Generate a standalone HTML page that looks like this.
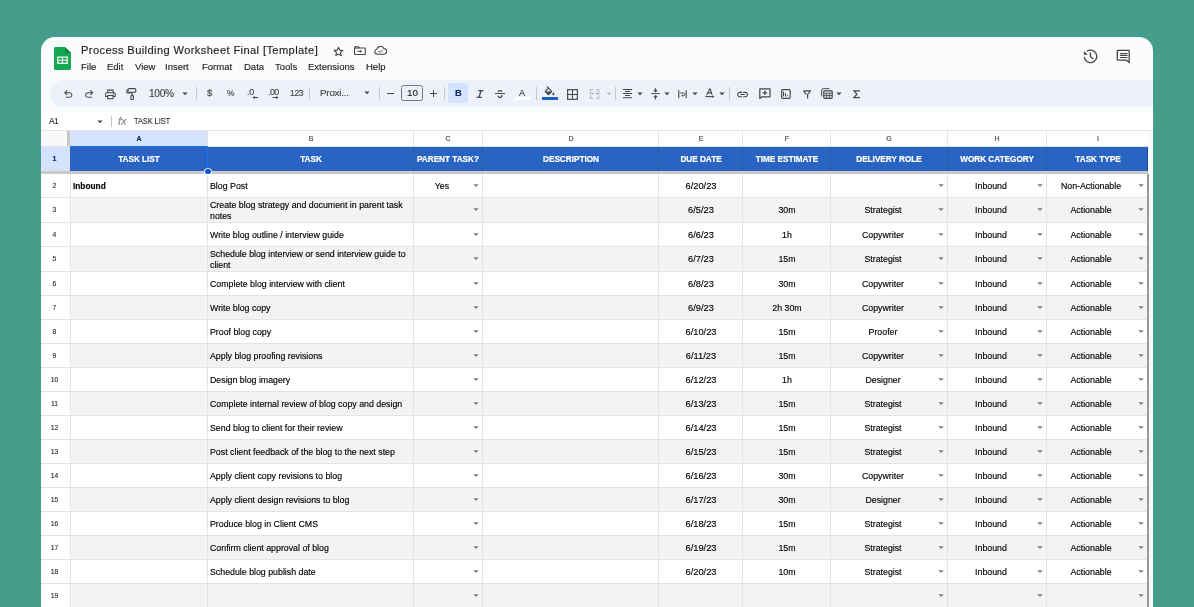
<!DOCTYPE html>
<html><head><meta charset="utf-8"><style>
html,body{margin:0;padding:0;width:1194px;height:607px;overflow:hidden;background:#469d8c;font-family:"Liberation Sans",sans-serif;}
#win{position:absolute;left:0;top:0;width:1194px;height:607px;clip-path:inset(37px 41px 0px 41px round 14px 14px 0 0);background:#f9fbfd;}
#win div{position:absolute;}
.t{white-space:nowrap;color:#000;will-change:transform;-webkit-text-stroke-width:0.15px;}
</style></head><body><div id="win">
<div style="left:41px;top:112px;width:1112px;height:495px;background:#fff"></div>
<svg style="position:absolute;left:54px;top:47px" width="17" height="23" viewBox="0 0 17 23"><path d="M1.5 0H11l6 6v15.5a1.5 1.5 0 0 1-1.5 1.5h-14A1.5 1.5 0 0 1 0 21.5v-20A1.5 1.5 0 0 1 1.5 0z" fill="#15a852"/><path d="M11 0l6 6h-6z" fill="#0a8a3e"/><rect x="3.2" y="9.5" width="10.6" height="7.5" fill="#fff"/><rect x="4.4" y="10.7" width="3.6" height="2" fill="#15a852"/><rect x="9" y="10.7" width="3.6" height="2" fill="#15a852"/><rect x="4.4" y="13.7" width="3.6" height="2" fill="#15a852"/><rect x="9" y="13.7" width="3.6" height="2" fill="#15a852"/></svg>
<div class="t" style="left:81px;top:42.2px;font-size:11.1px;color:#1f1f1f;line-height:16px;letter-spacing:0.4px;-webkit-text-stroke:0.15px #1f1f1f">Process Building Worksheet Final [Template]</div>
<svg style="position:absolute;left:333px;top:45.5px" width="11" height="10.5" viewBox="0 0 11 10.5"><path d="M5.5 1.2l1.25 2.95 3.15.28-2.4 2.08.72 3.1L5.5 8 2.78 9.6l.72-3.1-2.4-2.08 3.15-.28z" stroke="#444746" fill="none" stroke-width="1.1" stroke-linejoin="round"/></svg>
<svg style="position:absolute;left:353.5px;top:46px" width="12" height="9" viewBox="0 0 12 9"><path d="M1.1 0.9h3.4l1.1 1.1h5.1a0.6 0.6 0 0 1 .6.6v5.3a0.6 0.6 0 0 1-.6.6H1.2a0.6 0.6 0 0 1-.6-.6V1.5a0.6 0.6 0 0 1 .5-.6z" stroke="#444746" fill="none" stroke-width="1.1"/><path d="M0.8 2.2h4.6" stroke="#444746" stroke-width="0.9"/><path d="M3.3 5.2h3.3" stroke="#444746" stroke-width="1.1"/><path d="M8.3 5.2L6.1 3.7V6.7z" fill="#444746"/></svg>
<svg style="position:absolute;left:374.3px;top:46px" width="13" height="9" viewBox="0 0 13 9"><path d="M3.2 8.2a2.5 2.5 0 0 1-.35-4.95 3.7 3.7 0 0 1 7.05-0.6 2.6 2.6 0 0 1 0.1 5.55z" stroke="#444746" fill="none" stroke-width="1.1"/><path d="M4.5 5l1.5 1.5 2.6-2.6" stroke="#444746" fill="none" stroke-width="1"/></svg>
<div class="t" style="left:81px;top:61px;font-size:9.5px;color:#1f1f1f;line-height:12px">File</div>
<div class="t" style="left:107px;top:61px;font-size:9.5px;color:#1f1f1f;line-height:12px">Edit</div>
<div class="t" style="left:134.7px;top:61px;font-size:9.5px;color:#1f1f1f;line-height:12px">View</div>
<div class="t" style="left:165.4px;top:61px;font-size:9.5px;color:#1f1f1f;line-height:12px">Insert</div>
<div class="t" style="left:201.7px;top:61px;font-size:9.5px;color:#1f1f1f;line-height:12px">Format</div>
<div class="t" style="left:243.5px;top:61px;font-size:9.5px;color:#1f1f1f;line-height:12px">Data</div>
<div class="t" style="left:274.8px;top:61px;font-size:9.5px;color:#1f1f1f;line-height:12px">Tools</div>
<div class="t" style="left:308px;top:61px;font-size:9.5px;color:#1f1f1f;line-height:12px">Extensions</div>
<div class="t" style="left:365.5px;top:61px;font-size:9.5px;color:#1f1f1f;line-height:12px">Help</div>
<svg style="position:absolute;left:1083px;top:49px" width="15" height="15" viewBox="0 0 15 15"><path d="M3.94 2.32A6.2 6.2 0 1 1 1.32 7.9" stroke="#444746" fill="none" stroke-width="1.35"/><path d="M0.9 1.9V5.7H4.7z" fill="#444746"/><path d="M7.4 3.5V7.7L10.5 9.9" stroke="#444746" fill="none" stroke-width="1.3"/></svg>
<svg style="position:absolute;left:1116px;top:49px" width="15" height="15" viewBox="0 0 15 15"><path d="M1.9 1.4h10.7a0.6 0.6 0 0 1 .6.6V13.6l-2.5-2.4H1.9a0.6 0.6 0 0 1-.6-.6V2a0.6 0.6 0 0 1 .6-.6z" stroke="#444746" fill="none" stroke-width="1.3" stroke-linejoin="round"/><path d="M4 4.6h7.6M4 6.5h7.6M4 8.5h7.6" stroke="#444746" stroke-width="1.05"/></svg>
<div style="left:50px;top:80px;width:1130px;height:26.5px;background:#edf2fa;border-radius:13.25px"></div>
<svg style="position:absolute;left:61.7px;top:88.1px" width="12.45" height="12.45" viewBox="0 -960 960 960"><path fill="#444746" d="M280-200v-80h284q63 0 109.5-40T720-420q0-60-46.5-100T564-560H312l104 104-56 56-200-200 200-200 56 56-104 104h252q97 0 166.5 63T800-420q0 94-69.5 157T564-200H280Z"/></svg>
<svg style="position:absolute;left:82.7px;top:88.1px" width="12.45" height="12.45" viewBox="0 -960 960 960"><path fill="#444746" d="M396-200q-97 0-166.5-63T160-420q0-94 69.5-157T396-640h252L544-744l56-56 200 200-200 200-56-56 104-104H396q-63 0-109.5 40T240-420q0 60 46.5 100T396-280h284v80H396Z"/></svg>
<svg style="position:absolute;left:103.9px;top:87.6px" width="12.8" height="12.8" viewBox="0 -960 960 960"><path fill="#444746" d="M640-640v-120H320v120h-80v-200h480v200h-80Zm-480 80h640-640Zm560 100q17 0 28.5-11.5T760-500q0-17-11.5-28.5T720-540q-17 0-28.5 11.5T680-500q0 17 11.5 28.5T720-460Zm-80 260v-160H320v160h320Zm80 80H240v-160H80v-240q0-51 35-85.5t85-34.5h560q51 0 85.5 34.5T880-520v240H720v160Zm80-240v-160q0-17-11.5-28.5T760-560H200q-17 0-28.5 11.5T160-520v160h80v-80h480v80h80Z"/></svg>
<svg style="position:absolute;left:126px;top:88px" width="11" height="12" viewBox="0 0 11 12"><rect x="2" y="0.6" width="7.8" height="3.6" rx="1" stroke="#444746" fill="none" stroke-width="1.15"/><path d="M2 2.4H0.9v2.6h5.3v2.4" stroke="#444746" fill="none" stroke-width="1.1"/><rect x="4.9" y="7.6" width="2.6" height="3.9" rx="0.8" stroke="#444746" fill="none" stroke-width="1.1"/></svg>
<div class="t" style="left:148.7px;top:88.3px;font-size:10.2px;color:#444746;line-height:12px;letter-spacing:-0.3px">100%</div>
<svg style="position:absolute;left:181.6px;top:91.5px" width="6" height="4" viewBox="0 0 6 4"><path d="M0.3 0.5h5.4L3 3.3z" fill="#444746"/></svg>
<div style="left:196px;top:86.5px;width:1px;height:13px;background:#c7c7c7"></div>
<div style="left:309px;top:86.5px;width:1px;height:13px;background:#c7c7c7"></div>
<div style="left:379px;top:86.5px;width:1px;height:13px;background:#c7c7c7"></div>
<div style="left:444px;top:86.5px;width:1px;height:13px;background:#c7c7c7"></div>
<div style="left:536px;top:86.5px;width:1px;height:13px;background:#c7c7c7"></div>
<div style="left:615px;top:86.5px;width:1px;height:13px;background:#c7c7c7"></div>
<div style="left:729px;top:86.5px;width:1px;height:13px;background:#c7c7c7"></div>
<div class="t" style="left:206.5px;top:86.5px;font-size:9.5px;color:#444746;line-height:12px">$</div>
<div class="t" style="left:227px;top:87.2px;font-size:8.4px;color:#444746;line-height:12px">%</div>
<div class="t" style="left:246.5px;top:86px;font-size:9px;color:#444746;line-height:12px;letter-spacing:-0.3px">.0</div>
<svg style="position:absolute;left:251.5px;top:94.5px" width="7" height="5" viewBox="0 0 7 5"><path d="M6.3 2.5H1.5" stroke="#444746" stroke-width="1"/><path d="M0.4 2.5L2.9 0.9V4.1z" fill="#444746"/></svg>
<div class="t" style="left:267.5px;top:86px;font-size:9px;color:#444746;line-height:12px;letter-spacing:-0.6px">.00</div>
<svg style="position:absolute;left:272px;top:94.5px" width="7" height="5" viewBox="0 0 7 5"><path d="M0.7 2.5h4.8" stroke="#444746" stroke-width="1"/><path d="M6.6 2.5L4.1 0.9V4.1z" fill="#444746"/></svg>
<div class="t" style="left:289.5px;top:88px;font-size:8.6px;color:#444746;line-height:11px;letter-spacing:-0.4px">123</div>
<div class="t" style="left:319.7px;top:86.8px;font-size:9.9px;color:#444746;line-height:12px;letter-spacing:-0.25px">Proxi...</div>
<svg style="position:absolute;left:364px;top:91px" width="6" height="4" viewBox="0 0 6 4"><path d="M0.3 0.5h5.4L3 3.3z" fill="#444746"/></svg>
<div style="left:387px;top:92.5px;width:7px;height:1px;background:#444746"></div>
<div style="left:401px;top:85.3px;width:20.4px;height:13.4px;border:1px solid #747775;border-radius:2.5px"></div>
<div class="t" style="left:407.2px;top:86.8px;font-size:9.9px;color:#1f1f1f;line-height:12px">10</div>
<div style="left:430px;top:92.5px;width:7px;height:1px;background:#444746"></div>
<div style="left:433px;top:89.5px;width:1px;height:7px;background:#444746"></div>
<div style="left:448px;top:83px;width:19.5px;height:19.5px;background:#d3e3fd;border-radius:3px"></div>
<div class="t" style="left:454.6px;top:86.6px;font-size:9.4px;font-weight:700;color:#0b2a66;line-height:12px">B</div>
<svg style="position:absolute;left:475.5px;top:89.5px" width="8" height="8" viewBox="0 0 8 8"><path d="M2.2 0.7h5.2M0.6 7.3h5.2M5 0.7L3 7.3" stroke="#444746" fill="none" stroke-width="1.3"/></svg>
<svg style="position:absolute;left:494px;top:87.9px" width="12" height="12" viewBox="0 -960 960 960"><path fill="#444746" d="M486-160q-76 0-135-45t-85-123l88-38q14 48 48.5 79t85.5 31q42 0 76-20t34-64q0-18-7-33t-19-27h112q5 14 7.5 28.5T694-340q0 86-61.5 133T486-160ZM80-480v-80h800v80H80Zm402-326q66 0 115.5 32.5T674-674l-88 39q-9-29-33.5-52T484-710q-41 0-68 18.5T386-640h-96q2-69 54.5-117.5T482-806Z"/></svg>
<div class="t" style="left:518.5px;top:87px;font-size:9px;color:#444746;line-height:12px">A</div>
<div style="left:515px;top:97px;width:15px;height:2.5px;background:#fff"></div>
<svg style="position:absolute;left:542.8px;top:86.3px" width="13.2" height="13.2" viewBox="0 0 24 24"><path fill="#444746" d="M16.56 8.94L7.62 0 6.21 1.41l2.38 2.38-5.15 5.15c-.59.59-.59 1.54 0 2.12l5.5 5.5c.29.29.68.44 1.06.44s.77-.15 1.06-.44l5.5-5.5c.59-.58.59-1.530 0-2.12zM5.21 10L10 5.21 14.79 10H5.21zM19 11.5s-2 2.170-2 3.5c0 1.1.9 2 2 2s2-.9 2-2c0-1.33-2-3.5-2-3.5z"/></svg>
<div style="left:542px;top:97px;width:16px;height:2.8px;background:#1f5fc9"></div>
<svg style="position:absolute;left:567px;top:88.5px" width="11" height="11" viewBox="0 0 11 11"><rect x="0.65" y="0.65" width="9.7" height="9.7" stroke="#444746" fill="none" stroke-width="1.15"/><path d="M5.5 0.7v9.6M0.7 5.5h9.6" stroke="#444746" stroke-width="1.05"/></svg>
<svg style="position:absolute;left:588px;top:88px" width="13" height="12" viewBox="0 0 13 12"><path d="M5 1.7H2.5V4.2M2.5 6.9V10.2H5M8 1.7H10.7V4.2M10.7 6.9V10.2H8" stroke="#b3b6ba" fill="none" stroke-width="1.1"/><path d="M1 5.5H4.3M12.2 5.5H8.9" stroke="#b3b6ba" stroke-width="1"/><path d="M5.8 5.5L3.9 4.1V6.9zM7.4 5.5L9.3 4.1V6.9z" fill="#b3b6ba"/></svg>
<svg style="position:absolute;left:605.7px;top:91.5px" width="6" height="4" viewBox="0 0 6 4"><path d="M0.3 0.5h5.4L3 3.3z" fill="#bfc2c6"/></svg>
<svg style="position:absolute;left:622px;top:88px" width="11" height="12" viewBox="0 0 11 12"><path d="M0.9 1.5h9.2M3 3.55h5M0.9 5.5h9.2M3 7.5h5M0.9 9.8h9.2" stroke="#444746" stroke-width="1.05"/></svg>
<svg style="position:absolute;left:637px;top:91.5px" width="6" height="4" viewBox="0 0 6 4"><path d="M0.3 0.5h5.4L3 3.3z" fill="#444746"/></svg>
<svg style="position:absolute;left:650.5px;top:88px" width="9" height="12" viewBox="0 0 9 12"><path d="M0.3 5.6h8.4" stroke="#444746" stroke-width="1"/><path d="M4.5 0.3v3M4.5 8.2v3.2" stroke="#444746" stroke-width="1.1"/><path d="M2.6 2.3L4.5 4.2 6.4 2.3zM2.6 9.1L4.5 7.2 6.4 9.1z" fill="#444746" stroke="#444746" stroke-width="0.5"/></svg>
<svg style="position:absolute;left:664px;top:91.5px" width="6" height="4" viewBox="0 0 6 4"><path d="M0.3 0.5h5.4L3 3.3z" fill="#444746"/></svg>
<svg style="position:absolute;left:677.5px;top:88.5px" width="9" height="11" viewBox="0 0 9 11"><path d="M0.8 1.3v8M8.2 1.3v8" stroke="#444746" stroke-width="1.1"/><path d="M2.3 4h3.3a1.3 1.3 0 0 1 0 2.6H4" stroke="#444746" fill="none" stroke-width="1"/><path d="M4.8 5.7l-1 0.9 1 0.9" stroke="#444746" fill="none" stroke-width="0.9"/></svg>
<svg style="position:absolute;left:691.5px;top:91.5px" width="6" height="4" viewBox="0 0 6 4"><path d="M0.3 0.5h5.4L3 3.3z" fill="#444746"/></svg>
<svg style="position:absolute;left:705px;top:88px" width="10" height="12" viewBox="0 0 10 12"><path d="M1.6 6.9L4.7 1.1h0.6L7 6.9M2.7 4.9h3.8" stroke="#444746" fill="none" stroke-width="1.1"/><path d="M0.4 8.6h7.6" stroke="#444746" stroke-width="1.1"/><path d="M9.4 8.6L7.4 7.2V10z" fill="#444746"/></svg>
<svg style="position:absolute;left:719px;top:91.5px" width="6" height="4" viewBox="0 0 6 4"><path d="M0.3 0.5h5.4L3 3.3z" fill="#444746"/></svg>
<svg style="position:absolute;left:736.4px;top:87.7px" width="13.15" height="13.15" viewBox="0 -960 960 960"><path fill="#444746" d="M440-280H280q-83 0-141.5-58.5T80-480q0-83 58.5-141.5T280-680h160v80H280q-50 0-85 35t-35 85q0 50 35 85t85 35h160v80ZM320-440v-80h320v80H320Zm200 160v-80h160q50 0 85-35t35-85q0-50-35-85t-85-35H520v-80h160q83 0 141.5 58.5T880-480q0 83-58.5 141.5T680-280H520Z"/></svg>
<svg style="position:absolute;left:758.5px;top:88px" width="12" height="11" viewBox="0 0 12 11"><path d="M0.8 0.8h10.2v8H2.8L0.8 10.6z" stroke="#444746" fill="none" stroke-width="1.2" stroke-linejoin="round"/><path d="M5.9 2.5v4.6M3.6 4.8h4.6" stroke="#444746" stroke-width="1.2"/></svg>
<svg style="position:absolute;left:781px;top:88.5px" width="10" height="10" viewBox="0 0 10 10"><rect x="0.65" y="0.65" width="8.5" height="8.7" rx="1" stroke="#444746" fill="none" stroke-width="1.15"/><path d="M2.5 2.6v4.8M4.5 4v3.4M6.5 6.3v1.1" stroke="#444746" stroke-width="1"/></svg>
<svg style="position:absolute;left:803px;top:89.5px" width="8" height="9" viewBox="0 0 8 9"><path d="M0.5 0.8h7L4.6 4.5v4M3.4 4.5L0.5 0.8" stroke="#444746" fill="none" stroke-width="1.2" stroke-linejoin="round"/></svg>
<svg style="position:absolute;left:820.5px;top:88px" width="12" height="11" viewBox="0 0 12 11"><path d="M0.7 8.5V2.2a1.5 1.5 0 0 1 1.5-1.5h6.3" stroke="#444746" fill="none" stroke-width="1"/><rect x="2.8" y="2.8" width="8.4" height="7.6" rx="0.8" stroke="#444746" fill="none" stroke-width="1.2"/><path d="M2.8 5.2h8.4M2.8 7.6h8.4M5.6 5.2v5.2M8.4 5.2v5.2" stroke="#444746" stroke-width="0.9"/></svg>
<svg style="position:absolute;left:836px;top:91.5px" width="6" height="4" viewBox="0 0 6 4"><path d="M0.3 0.5h5.4L3 3.3z" fill="#444746"/></svg>
<svg style="position:absolute;left:852.5px;top:89.5px" width="7" height="9" viewBox="0 0 7 9"><path d="M6.3 1.6V0.8H0.9L3.9 4.2 0.9 7.6H6.3V6.8" stroke="#444746" fill="none" stroke-width="1.25" stroke-linejoin="miter"/></svg>
<div class="t" style="left:49px;top:115.5px;font-size:8.4px;color:#1f1f1f;line-height:11px;letter-spacing:-0.5px;-webkit-text-stroke:0.1px #1f1f1f">A1</div>
<svg style="position:absolute;left:96.8px;top:119.5px" width="6" height="4" viewBox="0 0 6 4"><path d="M0.3 0.5h5.4L3 3.3z" fill="#444746"/></svg>
<div style="left:110.5px;top:116px;width:1px;height:11px;background:#c7c7c7"></div>
<div class="t" style="left:118px;top:114.5px;font-size:11px;color:#80868b;line-height:12px;font-family:"Liberation Serif",serif;letter-spacing:-0.5px"><i>fx</i></div>
<div class="t" style="left:134.4px;top:115.5px;font-size:8.4px;color:#1f1f1f;line-height:11px;transform:scaleX(0.875);transform-origin:0 0;-webkit-text-stroke:0.1px #1f1f1f">TASK LIST</div>
<div style="left:41px;top:131px;width:1107px;height:476px;background:#fff"></div>
<div style="left:71px;top:198px;width:1077px;height:24px;background:#f3f3f3"></div>
<div style="left:71px;top:247px;width:1077px;height:24px;background:#f3f3f3"></div>
<div style="left:71px;top:296px;width:1077px;height:23px;background:#f3f3f3"></div>
<div style="left:71px;top:344px;width:1077px;height:23px;background:#f3f3f3"></div>
<div style="left:71px;top:392px;width:1077px;height:23px;background:#f3f3f3"></div>
<div style="left:71px;top:440px;width:1077px;height:23px;background:#f3f3f3"></div>
<div style="left:71px;top:488px;width:1077px;height:23px;background:#f3f3f3"></div>
<div style="left:71px;top:536px;width:1077px;height:23px;background:#f3f3f3"></div>
<div style="left:71px;top:584px;width:1077px;height:23px;background:#f3f3f3"></div>
<div style="left:41px;top:130px;width:1112px;height:1px;background:#e4e4e4"></div>
<div style="left:41px;top:131px;width:26px;height:15px;background:#f8f9fa"></div>
<div style="left:67px;top:131px;width:3px;height:16px;background:#c7c7c7"></div>
<div style="left:71px;top:131px;width:136px;height:15px;background:#d3e3fd"></div>
<div style="left:41px;top:146px;width:1107px;height:1px;background:#e4e4e4"></div>
<div style="left:41px;top:147px;width:29px;height:24px;background:#d3e3fd"></div>
<div style="left:70px;top:147px;width:1078px;height:24px;background:#2a64c2"></div>
<div style="left:41px;top:171px;width:1107px;height:3px;background:#c9c9c9"></div>
<div style="left:1148px;top:131px;width:5px;height:476px;background:#f8f9fa"></div>
<div style="left:41px;top:197px;width:1107px;height:1px;background:#e4e4e4"></div>
<div style="left:41px;top:222px;width:1107px;height:1px;background:#e4e4e4"></div>
<div style="left:41px;top:246px;width:1107px;height:1px;background:#e4e4e4"></div>
<div style="left:41px;top:271px;width:1107px;height:1px;background:#e4e4e4"></div>
<div style="left:41px;top:295px;width:1107px;height:1px;background:#e4e4e4"></div>
<div style="left:41px;top:319px;width:1107px;height:1px;background:#e4e4e4"></div>
<div style="left:41px;top:343px;width:1107px;height:1px;background:#e4e4e4"></div>
<div style="left:41px;top:367px;width:1107px;height:1px;background:#e4e4e4"></div>
<div style="left:41px;top:391px;width:1107px;height:1px;background:#e4e4e4"></div>
<div style="left:41px;top:415px;width:1107px;height:1px;background:#e4e4e4"></div>
<div style="left:41px;top:439px;width:1107px;height:1px;background:#e4e4e4"></div>
<div style="left:41px;top:463px;width:1107px;height:1px;background:#e4e4e4"></div>
<div style="left:41px;top:487px;width:1107px;height:1px;background:#e4e4e4"></div>
<div style="left:41px;top:511px;width:1107px;height:1px;background:#e4e4e4"></div>
<div style="left:41px;top:535px;width:1107px;height:1px;background:#e4e4e4"></div>
<div style="left:41px;top:559px;width:1107px;height:1px;background:#e4e4e4"></div>
<div style="left:41px;top:583px;width:1107px;height:1px;background:#e4e4e4"></div>
<div style="left:70px;top:131px;width:1px;height:15px;background:#e4e4e4"></div>
<div style="left:70px;top:174px;width:1px;height:433px;background:#e4e4e4"></div>
<div style="left:207px;top:131px;width:1px;height:15px;background:#e4e4e4"></div>
<div style="left:207px;top:174px;width:1px;height:433px;background:#e4e4e4"></div>
<div style="left:207px;top:147px;width:1px;height:24px;background:rgba(0,0,0,0.08)"></div>
<div style="left:413px;top:131px;width:1px;height:15px;background:#e4e4e4"></div>
<div style="left:413px;top:174px;width:1px;height:433px;background:#e4e4e4"></div>
<div style="left:413px;top:147px;width:1px;height:24px;background:rgba(0,0,0,0.08)"></div>
<div style="left:482px;top:131px;width:1px;height:15px;background:#e4e4e4"></div>
<div style="left:482px;top:174px;width:1px;height:433px;background:#e4e4e4"></div>
<div style="left:482px;top:147px;width:1px;height:24px;background:rgba(0,0,0,0.08)"></div>
<div style="left:658px;top:131px;width:1px;height:15px;background:#e4e4e4"></div>
<div style="left:658px;top:174px;width:1px;height:433px;background:#e4e4e4"></div>
<div style="left:658px;top:147px;width:1px;height:24px;background:rgba(0,0,0,0.08)"></div>
<div style="left:742px;top:131px;width:1px;height:15px;background:#e4e4e4"></div>
<div style="left:742px;top:174px;width:1px;height:433px;background:#e4e4e4"></div>
<div style="left:742px;top:147px;width:1px;height:24px;background:rgba(0,0,0,0.08)"></div>
<div style="left:830px;top:131px;width:1px;height:15px;background:#e4e4e4"></div>
<div style="left:830px;top:174px;width:1px;height:433px;background:#e4e4e4"></div>
<div style="left:830px;top:147px;width:1px;height:24px;background:rgba(0,0,0,0.08)"></div>
<div style="left:947px;top:131px;width:1px;height:15px;background:#e4e4e4"></div>
<div style="left:947px;top:174px;width:1px;height:433px;background:#e4e4e4"></div>
<div style="left:947px;top:147px;width:1px;height:24px;background:rgba(0,0,0,0.08)"></div>
<div style="left:1046px;top:131px;width:1px;height:15px;background:#e4e4e4"></div>
<div style="left:1046px;top:174px;width:1px;height:433px;background:#e4e4e4"></div>
<div style="left:1046px;top:147px;width:1px;height:24px;background:rgba(0,0,0,0.08)"></div>
<div style="left:1147px;top:174px;width:2px;height:433px;background:#9a9a9a"></div>
<div style="left:1147px;top:147px;width:1px;height:24px;background:#1d4a96"></div>
<div style="left:207px;top:146px;width:1px;height:25px;background:#1a73e8"></div>
<div style="left:70px;top:146px;width:138px;height:1px;background:#1a73e8"></div>
<div style="left:205.2px;top:168.5px;width:5.4px;height:5.4px;border-radius:50%;background:#0b57d0;box-shadow:0 0 0 0.8px #fff"></div>
<div class="t" style="left:39.0px;top:133.7px;width:200px;text-align:center;font-size:7px;font-weight:700;color:#0b2a66;line-height:10px">A</div>
<div class="t" style="left:210.5px;top:133.7px;width:200px;text-align:center;font-size:7px;color:#444;line-height:10px">B</div>
<div class="t" style="left:348.0px;top:133.7px;width:200px;text-align:center;font-size:7px;color:#444;line-height:10px">C</div>
<div class="t" style="left:470.5px;top:133.7px;width:200px;text-align:center;font-size:7px;color:#444;line-height:10px">D</div>
<div class="t" style="left:600.5px;top:133.7px;width:200px;text-align:center;font-size:7px;color:#444;line-height:10px">E</div>
<div class="t" style="left:686.5px;top:133.7px;width:200px;text-align:center;font-size:7px;color:#444;line-height:10px">F</div>
<div class="t" style="left:789.0px;top:133.7px;width:200px;text-align:center;font-size:7px;color:#444;line-height:10px">G</div>
<div class="t" style="left:897.0px;top:133.7px;width:200px;text-align:center;font-size:7px;color:#444;line-height:10px">H</div>
<div class="t" style="left:997.5px;top:133.7px;width:200px;text-align:center;font-size:7px;color:#444;line-height:10px">I</div>
<div class="t" style="left:39.0px;top:154px;width:200px;text-align:center;font-size:8.2px;font-weight:700;color:#fff;line-height:12px;-webkit-text-stroke:0.2px #fff">TASK LIST</div>
<div class="t" style="left:210.5px;top:154px;width:200px;text-align:center;font-size:8.2px;font-weight:700;color:#fff;line-height:12px;-webkit-text-stroke:0.2px #fff">TASK</div>
<div class="t" style="left:348.0px;top:154px;width:200px;text-align:center;font-size:8.2px;font-weight:700;color:#fff;line-height:12px;-webkit-text-stroke:0.2px #fff">PARENT TASK?</div>
<div class="t" style="left:470.5px;top:154px;width:200px;text-align:center;font-size:8.2px;font-weight:700;color:#fff;line-height:12px;-webkit-text-stroke:0.2px #fff">DESCRIPTION</div>
<div class="t" style="left:600.5px;top:154px;width:200px;text-align:center;font-size:8.2px;font-weight:700;color:#fff;line-height:12px;-webkit-text-stroke:0.2px #fff">DUE DATE</div>
<div class="t" style="left:686.5px;top:154px;width:200px;text-align:center;font-size:8.2px;font-weight:700;color:#fff;line-height:12px;-webkit-text-stroke:0.2px #fff">TIME ESTIMATE</div>
<div class="t" style="left:789.0px;top:154px;width:200px;text-align:center;font-size:8.2px;font-weight:700;color:#fff;line-height:12px;-webkit-text-stroke:0.2px #fff">DELIVERY ROLE</div>
<div class="t" style="left:897.0px;top:154px;width:200px;text-align:center;font-size:8.2px;font-weight:700;color:#fff;line-height:12px;-webkit-text-stroke:0.2px #fff">WORK CATEGORY</div>
<div class="t" style="left:997.5px;top:154px;width:200px;text-align:center;font-size:8.2px;font-weight:700;color:#fff;line-height:12px;-webkit-text-stroke:0.2px #fff">TASK TYPE</div>
<div class="t" style="left:40.0px;top:154px;width:29px;text-align:center;font-size:7px;font-weight:700;color:#0b2a66;line-height:10px">1</div>
<div class="t" style="left:40.4px;top:180.5px;width:29px;text-align:center;font-size:6.8px;color:#333;line-height:10px">2</div>
<div class="t" style="left:40.4px;top:205.0px;width:29px;text-align:center;font-size:6.8px;color:#333;line-height:10px">3</div>
<div class="t" style="left:40.4px;top:229.5px;width:29px;text-align:center;font-size:6.8px;color:#333;line-height:10px">4</div>
<div class="t" style="left:40.4px;top:254.0px;width:29px;text-align:center;font-size:6.8px;color:#333;line-height:10px">5</div>
<div class="t" style="left:40.4px;top:278.5px;width:29px;text-align:center;font-size:6.8px;color:#333;line-height:10px">6</div>
<div class="t" style="left:40.4px;top:302.5px;width:29px;text-align:center;font-size:6.8px;color:#333;line-height:10px">7</div>
<div class="t" style="left:40.4px;top:326.5px;width:29px;text-align:center;font-size:6.8px;color:#333;line-height:10px">8</div>
<div class="t" style="left:40.4px;top:350.5px;width:29px;text-align:center;font-size:6.8px;color:#333;line-height:10px">9</div>
<div class="t" style="left:40.4px;top:374.5px;width:29px;text-align:center;font-size:6.8px;color:#333;line-height:10px">10</div>
<div class="t" style="left:40.4px;top:398.5px;width:29px;text-align:center;font-size:6.8px;color:#333;line-height:10px">11</div>
<div class="t" style="left:40.4px;top:422.5px;width:29px;text-align:center;font-size:6.8px;color:#333;line-height:10px">12</div>
<div class="t" style="left:40.4px;top:446.5px;width:29px;text-align:center;font-size:6.8px;color:#333;line-height:10px">13</div>
<div class="t" style="left:40.4px;top:470.5px;width:29px;text-align:center;font-size:6.8px;color:#333;line-height:10px">14</div>
<div class="t" style="left:40.4px;top:494.5px;width:29px;text-align:center;font-size:6.8px;color:#333;line-height:10px">15</div>
<div class="t" style="left:40.4px;top:518.5px;width:29px;text-align:center;font-size:6.8px;color:#333;line-height:10px">16</div>
<div class="t" style="left:40.4px;top:542.5px;width:29px;text-align:center;font-size:6.8px;color:#333;line-height:10px">17</div>
<div class="t" style="left:40.4px;top:566.5px;width:29px;text-align:center;font-size:6.8px;color:#333;line-height:10px">18</div>
<div class="t" style="left:40.4px;top:590.5px;width:29px;text-align:center;font-size:6.8px;color:#333;line-height:10px">19</div>
<div class="t" style="left:72.5px;top:179.5px;font-size:8.3px;font-weight:700;line-height:12px">Inbound</div>
<div class="t" style="left:210px;top:179.5px;font-size:8.8px;line-height:12px">Blog Post</div>
<div style="left:473px;top:183.5px;width:6px;height:4px"><svg style="display:block" width="6" height="4" viewBox="0 0 6 4"><path d="M0.3 0.2h5.4L3 3.1z" fill="#7d7d7d"/></svg></div>
<div style="left:938px;top:183.5px;width:6px;height:4px"><svg style="display:block" width="6" height="4" viewBox="0 0 6 4"><path d="M0.3 0.2h5.4L3 3.1z" fill="#7d7d7d"/></svg></div>
<div style="left:1037px;top:183.5px;width:6px;height:4px"><svg style="display:block" width="6" height="4" viewBox="0 0 6 4"><path d="M0.3 0.2h5.4L3 3.1z" fill="#7d7d7d"/></svg></div>
<div style="left:1138px;top:183.5px;width:6px;height:4px"><svg style="display:block" width="6" height="4" viewBox="0 0 6 4"><path d="M0.3 0.2h5.4L3 3.1z" fill="#7d7d7d"/></svg></div>
<div class="t" style="left:411.5px;top:179.5px;width:60px;text-align:center;font-size:8.8px;line-height:12px">Yes</div>
<div class="t" style="left:660.5px;top:179.9px;width:80px;text-align:center;font-size:9.3px;line-height:12px">6/20/23</div>
<div class="t" style="left:945.6px;top:179.5px;width:90px;text-align:center;font-size:8.8px;line-height:12px">Inbound</div>
<div class="t" style="left:1045.7px;top:179.5px;width:90px;text-align:center;font-size:8.8px;line-height:12px">Non-Actionable</div>
<div class="t" style="left:210px;top:200.0px;font-size:8.8px;line-height:10.5px">Create blog strategy and document in parent task<br>notes</div>
<div style="left:473px;top:208.0px;width:6px;height:4px"><svg style="display:block" width="6" height="4" viewBox="0 0 6 4"><path d="M0.3 0.2h5.4L3 3.1z" fill="#7d7d7d"/></svg></div>
<div style="left:938px;top:208.0px;width:6px;height:4px"><svg style="display:block" width="6" height="4" viewBox="0 0 6 4"><path d="M0.3 0.2h5.4L3 3.1z" fill="#7d7d7d"/></svg></div>
<div style="left:1037px;top:208.0px;width:6px;height:4px"><svg style="display:block" width="6" height="4" viewBox="0 0 6 4"><path d="M0.3 0.2h5.4L3 3.1z" fill="#7d7d7d"/></svg></div>
<div style="left:1138px;top:208.0px;width:6px;height:4px"><svg style="display:block" width="6" height="4" viewBox="0 0 6 4"><path d="M0.3 0.2h5.4L3 3.1z" fill="#7d7d7d"/></svg></div>
<div class="t" style="left:660.5px;top:204.4px;width:80px;text-align:center;font-size:9.3px;line-height:12px">6/5/23</div>
<div class="t" style="left:746.5px;top:204.0px;width:80px;text-align:center;font-size:8.8px;line-height:12px">30m</div>
<div class="t" style="left:832.5px;top:204.0px;width:100px;text-align:center;font-size:8.8px;line-height:12px">Strategist</div>
<div class="t" style="left:945.6px;top:204.0px;width:90px;text-align:center;font-size:8.8px;line-height:12px">Inbound</div>
<div class="t" style="left:1045.7px;top:204.0px;width:90px;text-align:center;font-size:8.8px;line-height:12px">Actionable</div>
<div class="t" style="left:210px;top:228.5px;font-size:8.8px;line-height:12px">Write blog outline / interview guide</div>
<div style="left:473px;top:232.5px;width:6px;height:4px"><svg style="display:block" width="6" height="4" viewBox="0 0 6 4"><path d="M0.3 0.2h5.4L3 3.1z" fill="#7d7d7d"/></svg></div>
<div style="left:938px;top:232.5px;width:6px;height:4px"><svg style="display:block" width="6" height="4" viewBox="0 0 6 4"><path d="M0.3 0.2h5.4L3 3.1z" fill="#7d7d7d"/></svg></div>
<div style="left:1037px;top:232.5px;width:6px;height:4px"><svg style="display:block" width="6" height="4" viewBox="0 0 6 4"><path d="M0.3 0.2h5.4L3 3.1z" fill="#7d7d7d"/></svg></div>
<div style="left:1138px;top:232.5px;width:6px;height:4px"><svg style="display:block" width="6" height="4" viewBox="0 0 6 4"><path d="M0.3 0.2h5.4L3 3.1z" fill="#7d7d7d"/></svg></div>
<div class="t" style="left:660.5px;top:228.9px;width:80px;text-align:center;font-size:9.3px;line-height:12px">6/6/23</div>
<div class="t" style="left:746.5px;top:228.5px;width:80px;text-align:center;font-size:8.8px;line-height:12px">1h</div>
<div class="t" style="left:832.5px;top:228.5px;width:100px;text-align:center;font-size:8.8px;line-height:12px">Copywriter</div>
<div class="t" style="left:945.6px;top:228.5px;width:90px;text-align:center;font-size:8.8px;line-height:12px">Inbound</div>
<div class="t" style="left:1045.7px;top:228.5px;width:90px;text-align:center;font-size:8.8px;line-height:12px">Actionable</div>
<div class="t" style="left:210px;top:249.0px;font-size:8.8px;line-height:10.5px">Schedule blog interview or send interview guide to<br>client</div>
<div style="left:473px;top:257.0px;width:6px;height:4px"><svg style="display:block" width="6" height="4" viewBox="0 0 6 4"><path d="M0.3 0.2h5.4L3 3.1z" fill="#7d7d7d"/></svg></div>
<div style="left:938px;top:257.0px;width:6px;height:4px"><svg style="display:block" width="6" height="4" viewBox="0 0 6 4"><path d="M0.3 0.2h5.4L3 3.1z" fill="#7d7d7d"/></svg></div>
<div style="left:1037px;top:257.0px;width:6px;height:4px"><svg style="display:block" width="6" height="4" viewBox="0 0 6 4"><path d="M0.3 0.2h5.4L3 3.1z" fill="#7d7d7d"/></svg></div>
<div style="left:1138px;top:257.0px;width:6px;height:4px"><svg style="display:block" width="6" height="4" viewBox="0 0 6 4"><path d="M0.3 0.2h5.4L3 3.1z" fill="#7d7d7d"/></svg></div>
<div class="t" style="left:660.5px;top:253.4px;width:80px;text-align:center;font-size:9.3px;line-height:12px">6/7/23</div>
<div class="t" style="left:746.5px;top:253.0px;width:80px;text-align:center;font-size:8.8px;line-height:12px">15m</div>
<div class="t" style="left:832.5px;top:253.0px;width:100px;text-align:center;font-size:8.8px;line-height:12px">Strategist</div>
<div class="t" style="left:945.6px;top:253.0px;width:90px;text-align:center;font-size:8.8px;line-height:12px">Inbound</div>
<div class="t" style="left:1045.7px;top:253.0px;width:90px;text-align:center;font-size:8.8px;line-height:12px">Actionable</div>
<div class="t" style="left:210px;top:277.5px;font-size:8.8px;line-height:12px">Complete blog interview with client</div>
<div style="left:473px;top:281.5px;width:6px;height:4px"><svg style="display:block" width="6" height="4" viewBox="0 0 6 4"><path d="M0.3 0.2h5.4L3 3.1z" fill="#7d7d7d"/></svg></div>
<div style="left:938px;top:281.5px;width:6px;height:4px"><svg style="display:block" width="6" height="4" viewBox="0 0 6 4"><path d="M0.3 0.2h5.4L3 3.1z" fill="#7d7d7d"/></svg></div>
<div style="left:1037px;top:281.5px;width:6px;height:4px"><svg style="display:block" width="6" height="4" viewBox="0 0 6 4"><path d="M0.3 0.2h5.4L3 3.1z" fill="#7d7d7d"/></svg></div>
<div style="left:1138px;top:281.5px;width:6px;height:4px"><svg style="display:block" width="6" height="4" viewBox="0 0 6 4"><path d="M0.3 0.2h5.4L3 3.1z" fill="#7d7d7d"/></svg></div>
<div class="t" style="left:660.5px;top:277.9px;width:80px;text-align:center;font-size:9.3px;line-height:12px">6/8/23</div>
<div class="t" style="left:746.5px;top:277.5px;width:80px;text-align:center;font-size:8.8px;line-height:12px">30m</div>
<div class="t" style="left:832.5px;top:277.5px;width:100px;text-align:center;font-size:8.8px;line-height:12px">Copywriter</div>
<div class="t" style="left:945.6px;top:277.5px;width:90px;text-align:center;font-size:8.8px;line-height:12px">Inbound</div>
<div class="t" style="left:1045.7px;top:277.5px;width:90px;text-align:center;font-size:8.8px;line-height:12px">Actionable</div>
<div class="t" style="left:210px;top:301.5px;font-size:8.8px;line-height:12px">Write blog copy</div>
<div style="left:473px;top:305.5px;width:6px;height:4px"><svg style="display:block" width="6" height="4" viewBox="0 0 6 4"><path d="M0.3 0.2h5.4L3 3.1z" fill="#7d7d7d"/></svg></div>
<div style="left:938px;top:305.5px;width:6px;height:4px"><svg style="display:block" width="6" height="4" viewBox="0 0 6 4"><path d="M0.3 0.2h5.4L3 3.1z" fill="#7d7d7d"/></svg></div>
<div style="left:1037px;top:305.5px;width:6px;height:4px"><svg style="display:block" width="6" height="4" viewBox="0 0 6 4"><path d="M0.3 0.2h5.4L3 3.1z" fill="#7d7d7d"/></svg></div>
<div style="left:1138px;top:305.5px;width:6px;height:4px"><svg style="display:block" width="6" height="4" viewBox="0 0 6 4"><path d="M0.3 0.2h5.4L3 3.1z" fill="#7d7d7d"/></svg></div>
<div class="t" style="left:660.5px;top:301.9px;width:80px;text-align:center;font-size:9.3px;line-height:12px">6/9/23</div>
<div class="t" style="left:746.5px;top:301.5px;width:80px;text-align:center;font-size:8.8px;line-height:12px">2h 30m</div>
<div class="t" style="left:832.5px;top:301.5px;width:100px;text-align:center;font-size:8.8px;line-height:12px">Copywriter</div>
<div class="t" style="left:945.6px;top:301.5px;width:90px;text-align:center;font-size:8.8px;line-height:12px">Inbound</div>
<div class="t" style="left:1045.7px;top:301.5px;width:90px;text-align:center;font-size:8.8px;line-height:12px">Actionable</div>
<div class="t" style="left:210px;top:325.5px;font-size:8.8px;line-height:12px">Proof blog copy</div>
<div style="left:473px;top:329.5px;width:6px;height:4px"><svg style="display:block" width="6" height="4" viewBox="0 0 6 4"><path d="M0.3 0.2h5.4L3 3.1z" fill="#7d7d7d"/></svg></div>
<div style="left:938px;top:329.5px;width:6px;height:4px"><svg style="display:block" width="6" height="4" viewBox="0 0 6 4"><path d="M0.3 0.2h5.4L3 3.1z" fill="#7d7d7d"/></svg></div>
<div style="left:1037px;top:329.5px;width:6px;height:4px"><svg style="display:block" width="6" height="4" viewBox="0 0 6 4"><path d="M0.3 0.2h5.4L3 3.1z" fill="#7d7d7d"/></svg></div>
<div style="left:1138px;top:329.5px;width:6px;height:4px"><svg style="display:block" width="6" height="4" viewBox="0 0 6 4"><path d="M0.3 0.2h5.4L3 3.1z" fill="#7d7d7d"/></svg></div>
<div class="t" style="left:660.5px;top:325.9px;width:80px;text-align:center;font-size:9.3px;line-height:12px">6/10/23</div>
<div class="t" style="left:746.5px;top:325.5px;width:80px;text-align:center;font-size:8.8px;line-height:12px">15m</div>
<div class="t" style="left:832.5px;top:325.5px;width:100px;text-align:center;font-size:8.8px;line-height:12px">Proofer</div>
<div class="t" style="left:945.6px;top:325.5px;width:90px;text-align:center;font-size:8.8px;line-height:12px">Inbound</div>
<div class="t" style="left:1045.7px;top:325.5px;width:90px;text-align:center;font-size:8.8px;line-height:12px">Actionable</div>
<div class="t" style="left:210px;top:349.5px;font-size:8.8px;line-height:12px">Apply blog proofing revisions</div>
<div style="left:473px;top:353.5px;width:6px;height:4px"><svg style="display:block" width="6" height="4" viewBox="0 0 6 4"><path d="M0.3 0.2h5.4L3 3.1z" fill="#7d7d7d"/></svg></div>
<div style="left:938px;top:353.5px;width:6px;height:4px"><svg style="display:block" width="6" height="4" viewBox="0 0 6 4"><path d="M0.3 0.2h5.4L3 3.1z" fill="#7d7d7d"/></svg></div>
<div style="left:1037px;top:353.5px;width:6px;height:4px"><svg style="display:block" width="6" height="4" viewBox="0 0 6 4"><path d="M0.3 0.2h5.4L3 3.1z" fill="#7d7d7d"/></svg></div>
<div style="left:1138px;top:353.5px;width:6px;height:4px"><svg style="display:block" width="6" height="4" viewBox="0 0 6 4"><path d="M0.3 0.2h5.4L3 3.1z" fill="#7d7d7d"/></svg></div>
<div class="t" style="left:660.5px;top:349.9px;width:80px;text-align:center;font-size:9.3px;line-height:12px">6/11/23</div>
<div class="t" style="left:746.5px;top:349.5px;width:80px;text-align:center;font-size:8.8px;line-height:12px">15m</div>
<div class="t" style="left:832.5px;top:349.5px;width:100px;text-align:center;font-size:8.8px;line-height:12px">Copywriter</div>
<div class="t" style="left:945.6px;top:349.5px;width:90px;text-align:center;font-size:8.8px;line-height:12px">Inbound</div>
<div class="t" style="left:1045.7px;top:349.5px;width:90px;text-align:center;font-size:8.8px;line-height:12px">Actionable</div>
<div class="t" style="left:210px;top:373.5px;font-size:8.8px;line-height:12px">Design blog imagery</div>
<div style="left:473px;top:377.5px;width:6px;height:4px"><svg style="display:block" width="6" height="4" viewBox="0 0 6 4"><path d="M0.3 0.2h5.4L3 3.1z" fill="#7d7d7d"/></svg></div>
<div style="left:938px;top:377.5px;width:6px;height:4px"><svg style="display:block" width="6" height="4" viewBox="0 0 6 4"><path d="M0.3 0.2h5.4L3 3.1z" fill="#7d7d7d"/></svg></div>
<div style="left:1037px;top:377.5px;width:6px;height:4px"><svg style="display:block" width="6" height="4" viewBox="0 0 6 4"><path d="M0.3 0.2h5.4L3 3.1z" fill="#7d7d7d"/></svg></div>
<div style="left:1138px;top:377.5px;width:6px;height:4px"><svg style="display:block" width="6" height="4" viewBox="0 0 6 4"><path d="M0.3 0.2h5.4L3 3.1z" fill="#7d7d7d"/></svg></div>
<div class="t" style="left:660.5px;top:373.9px;width:80px;text-align:center;font-size:9.3px;line-height:12px">6/12/23</div>
<div class="t" style="left:746.5px;top:373.5px;width:80px;text-align:center;font-size:8.8px;line-height:12px">1h</div>
<div class="t" style="left:832.5px;top:373.5px;width:100px;text-align:center;font-size:8.8px;line-height:12px">Designer</div>
<div class="t" style="left:945.6px;top:373.5px;width:90px;text-align:center;font-size:8.8px;line-height:12px">Inbound</div>
<div class="t" style="left:1045.7px;top:373.5px;width:90px;text-align:center;font-size:8.8px;line-height:12px">Actionable</div>
<div class="t" style="left:210px;top:397.5px;font-size:8.8px;line-height:12px">Complete internal review of blog copy and design</div>
<div style="left:473px;top:401.5px;width:6px;height:4px"><svg style="display:block" width="6" height="4" viewBox="0 0 6 4"><path d="M0.3 0.2h5.4L3 3.1z" fill="#7d7d7d"/></svg></div>
<div style="left:938px;top:401.5px;width:6px;height:4px"><svg style="display:block" width="6" height="4" viewBox="0 0 6 4"><path d="M0.3 0.2h5.4L3 3.1z" fill="#7d7d7d"/></svg></div>
<div style="left:1037px;top:401.5px;width:6px;height:4px"><svg style="display:block" width="6" height="4" viewBox="0 0 6 4"><path d="M0.3 0.2h5.4L3 3.1z" fill="#7d7d7d"/></svg></div>
<div style="left:1138px;top:401.5px;width:6px;height:4px"><svg style="display:block" width="6" height="4" viewBox="0 0 6 4"><path d="M0.3 0.2h5.4L3 3.1z" fill="#7d7d7d"/></svg></div>
<div class="t" style="left:660.5px;top:397.9px;width:80px;text-align:center;font-size:9.3px;line-height:12px">6/13/23</div>
<div class="t" style="left:746.5px;top:397.5px;width:80px;text-align:center;font-size:8.8px;line-height:12px">15m</div>
<div class="t" style="left:832.5px;top:397.5px;width:100px;text-align:center;font-size:8.8px;line-height:12px">Strategist</div>
<div class="t" style="left:945.6px;top:397.5px;width:90px;text-align:center;font-size:8.8px;line-height:12px">Inbound</div>
<div class="t" style="left:1045.7px;top:397.5px;width:90px;text-align:center;font-size:8.8px;line-height:12px">Actionable</div>
<div class="t" style="left:210px;top:421.5px;font-size:8.8px;line-height:12px">Send blog to client for their review</div>
<div style="left:473px;top:425.5px;width:6px;height:4px"><svg style="display:block" width="6" height="4" viewBox="0 0 6 4"><path d="M0.3 0.2h5.4L3 3.1z" fill="#7d7d7d"/></svg></div>
<div style="left:938px;top:425.5px;width:6px;height:4px"><svg style="display:block" width="6" height="4" viewBox="0 0 6 4"><path d="M0.3 0.2h5.4L3 3.1z" fill="#7d7d7d"/></svg></div>
<div style="left:1037px;top:425.5px;width:6px;height:4px"><svg style="display:block" width="6" height="4" viewBox="0 0 6 4"><path d="M0.3 0.2h5.4L3 3.1z" fill="#7d7d7d"/></svg></div>
<div style="left:1138px;top:425.5px;width:6px;height:4px"><svg style="display:block" width="6" height="4" viewBox="0 0 6 4"><path d="M0.3 0.2h5.4L3 3.1z" fill="#7d7d7d"/></svg></div>
<div class="t" style="left:660.5px;top:421.9px;width:80px;text-align:center;font-size:9.3px;line-height:12px">6/14/23</div>
<div class="t" style="left:746.5px;top:421.5px;width:80px;text-align:center;font-size:8.8px;line-height:12px">15m</div>
<div class="t" style="left:832.5px;top:421.5px;width:100px;text-align:center;font-size:8.8px;line-height:12px">Strategist</div>
<div class="t" style="left:945.6px;top:421.5px;width:90px;text-align:center;font-size:8.8px;line-height:12px">Inbound</div>
<div class="t" style="left:1045.7px;top:421.5px;width:90px;text-align:center;font-size:8.8px;line-height:12px">Actionable</div>
<div class="t" style="left:210px;top:445.5px;font-size:8.8px;line-height:12px">Post client feedback of the blog to the next step</div>
<div style="left:473px;top:449.5px;width:6px;height:4px"><svg style="display:block" width="6" height="4" viewBox="0 0 6 4"><path d="M0.3 0.2h5.4L3 3.1z" fill="#7d7d7d"/></svg></div>
<div style="left:938px;top:449.5px;width:6px;height:4px"><svg style="display:block" width="6" height="4" viewBox="0 0 6 4"><path d="M0.3 0.2h5.4L3 3.1z" fill="#7d7d7d"/></svg></div>
<div style="left:1037px;top:449.5px;width:6px;height:4px"><svg style="display:block" width="6" height="4" viewBox="0 0 6 4"><path d="M0.3 0.2h5.4L3 3.1z" fill="#7d7d7d"/></svg></div>
<div style="left:1138px;top:449.5px;width:6px;height:4px"><svg style="display:block" width="6" height="4" viewBox="0 0 6 4"><path d="M0.3 0.2h5.4L3 3.1z" fill="#7d7d7d"/></svg></div>
<div class="t" style="left:660.5px;top:445.9px;width:80px;text-align:center;font-size:9.3px;line-height:12px">6/15/23</div>
<div class="t" style="left:746.5px;top:445.5px;width:80px;text-align:center;font-size:8.8px;line-height:12px">15m</div>
<div class="t" style="left:832.5px;top:445.5px;width:100px;text-align:center;font-size:8.8px;line-height:12px">Strategist</div>
<div class="t" style="left:945.6px;top:445.5px;width:90px;text-align:center;font-size:8.8px;line-height:12px">Inbound</div>
<div class="t" style="left:1045.7px;top:445.5px;width:90px;text-align:center;font-size:8.8px;line-height:12px">Actionable</div>
<div class="t" style="left:210px;top:469.5px;font-size:8.8px;line-height:12px">Apply client copy revisions to blog</div>
<div style="left:473px;top:473.5px;width:6px;height:4px"><svg style="display:block" width="6" height="4" viewBox="0 0 6 4"><path d="M0.3 0.2h5.4L3 3.1z" fill="#7d7d7d"/></svg></div>
<div style="left:938px;top:473.5px;width:6px;height:4px"><svg style="display:block" width="6" height="4" viewBox="0 0 6 4"><path d="M0.3 0.2h5.4L3 3.1z" fill="#7d7d7d"/></svg></div>
<div style="left:1037px;top:473.5px;width:6px;height:4px"><svg style="display:block" width="6" height="4" viewBox="0 0 6 4"><path d="M0.3 0.2h5.4L3 3.1z" fill="#7d7d7d"/></svg></div>
<div style="left:1138px;top:473.5px;width:6px;height:4px"><svg style="display:block" width="6" height="4" viewBox="0 0 6 4"><path d="M0.3 0.2h5.4L3 3.1z" fill="#7d7d7d"/></svg></div>
<div class="t" style="left:660.5px;top:469.9px;width:80px;text-align:center;font-size:9.3px;line-height:12px">6/16/23</div>
<div class="t" style="left:746.5px;top:469.5px;width:80px;text-align:center;font-size:8.8px;line-height:12px">30m</div>
<div class="t" style="left:832.5px;top:469.5px;width:100px;text-align:center;font-size:8.8px;line-height:12px">Copywriter</div>
<div class="t" style="left:945.6px;top:469.5px;width:90px;text-align:center;font-size:8.8px;line-height:12px">Inbound</div>
<div class="t" style="left:1045.7px;top:469.5px;width:90px;text-align:center;font-size:8.8px;line-height:12px">Actionable</div>
<div class="t" style="left:210px;top:493.5px;font-size:8.8px;line-height:12px">Apply client design revisions to blog</div>
<div style="left:473px;top:497.5px;width:6px;height:4px"><svg style="display:block" width="6" height="4" viewBox="0 0 6 4"><path d="M0.3 0.2h5.4L3 3.1z" fill="#7d7d7d"/></svg></div>
<div style="left:938px;top:497.5px;width:6px;height:4px"><svg style="display:block" width="6" height="4" viewBox="0 0 6 4"><path d="M0.3 0.2h5.4L3 3.1z" fill="#7d7d7d"/></svg></div>
<div style="left:1037px;top:497.5px;width:6px;height:4px"><svg style="display:block" width="6" height="4" viewBox="0 0 6 4"><path d="M0.3 0.2h5.4L3 3.1z" fill="#7d7d7d"/></svg></div>
<div style="left:1138px;top:497.5px;width:6px;height:4px"><svg style="display:block" width="6" height="4" viewBox="0 0 6 4"><path d="M0.3 0.2h5.4L3 3.1z" fill="#7d7d7d"/></svg></div>
<div class="t" style="left:660.5px;top:493.9px;width:80px;text-align:center;font-size:9.3px;line-height:12px">6/17/23</div>
<div class="t" style="left:746.5px;top:493.5px;width:80px;text-align:center;font-size:8.8px;line-height:12px">30m</div>
<div class="t" style="left:832.5px;top:493.5px;width:100px;text-align:center;font-size:8.8px;line-height:12px">Designer</div>
<div class="t" style="left:945.6px;top:493.5px;width:90px;text-align:center;font-size:8.8px;line-height:12px">Inbound</div>
<div class="t" style="left:1045.7px;top:493.5px;width:90px;text-align:center;font-size:8.8px;line-height:12px">Actionable</div>
<div class="t" style="left:210px;top:517.5px;font-size:8.8px;line-height:12px">Produce blog in Client CMS</div>
<div style="left:473px;top:521.5px;width:6px;height:4px"><svg style="display:block" width="6" height="4" viewBox="0 0 6 4"><path d="M0.3 0.2h5.4L3 3.1z" fill="#7d7d7d"/></svg></div>
<div style="left:938px;top:521.5px;width:6px;height:4px"><svg style="display:block" width="6" height="4" viewBox="0 0 6 4"><path d="M0.3 0.2h5.4L3 3.1z" fill="#7d7d7d"/></svg></div>
<div style="left:1037px;top:521.5px;width:6px;height:4px"><svg style="display:block" width="6" height="4" viewBox="0 0 6 4"><path d="M0.3 0.2h5.4L3 3.1z" fill="#7d7d7d"/></svg></div>
<div style="left:1138px;top:521.5px;width:6px;height:4px"><svg style="display:block" width="6" height="4" viewBox="0 0 6 4"><path d="M0.3 0.2h5.4L3 3.1z" fill="#7d7d7d"/></svg></div>
<div class="t" style="left:660.5px;top:517.9px;width:80px;text-align:center;font-size:9.3px;line-height:12px">6/18/23</div>
<div class="t" style="left:746.5px;top:517.5px;width:80px;text-align:center;font-size:8.8px;line-height:12px">15m</div>
<div class="t" style="left:832.5px;top:517.5px;width:100px;text-align:center;font-size:8.8px;line-height:12px">Strategist</div>
<div class="t" style="left:945.6px;top:517.5px;width:90px;text-align:center;font-size:8.8px;line-height:12px">Inbound</div>
<div class="t" style="left:1045.7px;top:517.5px;width:90px;text-align:center;font-size:8.8px;line-height:12px">Actionable</div>
<div class="t" style="left:210px;top:541.5px;font-size:8.8px;line-height:12px">Confirm client approval of blog</div>
<div style="left:473px;top:545.5px;width:6px;height:4px"><svg style="display:block" width="6" height="4" viewBox="0 0 6 4"><path d="M0.3 0.2h5.4L3 3.1z" fill="#7d7d7d"/></svg></div>
<div style="left:938px;top:545.5px;width:6px;height:4px"><svg style="display:block" width="6" height="4" viewBox="0 0 6 4"><path d="M0.3 0.2h5.4L3 3.1z" fill="#7d7d7d"/></svg></div>
<div style="left:1037px;top:545.5px;width:6px;height:4px"><svg style="display:block" width="6" height="4" viewBox="0 0 6 4"><path d="M0.3 0.2h5.4L3 3.1z" fill="#7d7d7d"/></svg></div>
<div style="left:1138px;top:545.5px;width:6px;height:4px"><svg style="display:block" width="6" height="4" viewBox="0 0 6 4"><path d="M0.3 0.2h5.4L3 3.1z" fill="#7d7d7d"/></svg></div>
<div class="t" style="left:660.5px;top:541.9px;width:80px;text-align:center;font-size:9.3px;line-height:12px">6/19/23</div>
<div class="t" style="left:746.5px;top:541.5px;width:80px;text-align:center;font-size:8.8px;line-height:12px">15m</div>
<div class="t" style="left:832.5px;top:541.5px;width:100px;text-align:center;font-size:8.8px;line-height:12px">Strategist</div>
<div class="t" style="left:945.6px;top:541.5px;width:90px;text-align:center;font-size:8.8px;line-height:12px">Inbound</div>
<div class="t" style="left:1045.7px;top:541.5px;width:90px;text-align:center;font-size:8.8px;line-height:12px">Actionable</div>
<div class="t" style="left:210px;top:565.5px;font-size:8.8px;line-height:12px">Schedule blog publish date</div>
<div style="left:473px;top:569.5px;width:6px;height:4px"><svg style="display:block" width="6" height="4" viewBox="0 0 6 4"><path d="M0.3 0.2h5.4L3 3.1z" fill="#7d7d7d"/></svg></div>
<div style="left:938px;top:569.5px;width:6px;height:4px"><svg style="display:block" width="6" height="4" viewBox="0 0 6 4"><path d="M0.3 0.2h5.4L3 3.1z" fill="#7d7d7d"/></svg></div>
<div style="left:1037px;top:569.5px;width:6px;height:4px"><svg style="display:block" width="6" height="4" viewBox="0 0 6 4"><path d="M0.3 0.2h5.4L3 3.1z" fill="#7d7d7d"/></svg></div>
<div style="left:1138px;top:569.5px;width:6px;height:4px"><svg style="display:block" width="6" height="4" viewBox="0 0 6 4"><path d="M0.3 0.2h5.4L3 3.1z" fill="#7d7d7d"/></svg></div>
<div class="t" style="left:660.5px;top:565.9px;width:80px;text-align:center;font-size:9.3px;line-height:12px">6/20/23</div>
<div class="t" style="left:746.5px;top:565.5px;width:80px;text-align:center;font-size:8.8px;line-height:12px">10m</div>
<div class="t" style="left:832.5px;top:565.5px;width:100px;text-align:center;font-size:8.8px;line-height:12px">Strategist</div>
<div class="t" style="left:945.6px;top:565.5px;width:90px;text-align:center;font-size:8.8px;line-height:12px">Inbound</div>
<div class="t" style="left:1045.7px;top:565.5px;width:90px;text-align:center;font-size:8.8px;line-height:12px">Actionable</div>
<div style="left:473px;top:593.5px;width:6px;height:4px"><svg style="display:block" width="6" height="4" viewBox="0 0 6 4"><path d="M0.3 0.2h5.4L3 3.1z" fill="#7d7d7d"/></svg></div>
<div style="left:938px;top:593.5px;width:6px;height:4px"><svg style="display:block" width="6" height="4" viewBox="0 0 6 4"><path d="M0.3 0.2h5.4L3 3.1z" fill="#7d7d7d"/></svg></div>
<div style="left:1037px;top:593.5px;width:6px;height:4px"><svg style="display:block" width="6" height="4" viewBox="0 0 6 4"><path d="M0.3 0.2h5.4L3 3.1z" fill="#7d7d7d"/></svg></div>
<div style="left:1138px;top:593.5px;width:6px;height:4px"><svg style="display:block" width="6" height="4" viewBox="0 0 6 4"><path d="M0.3 0.2h5.4L3 3.1z" fill="#7d7d7d"/></svg></div>
</div></body></html>
